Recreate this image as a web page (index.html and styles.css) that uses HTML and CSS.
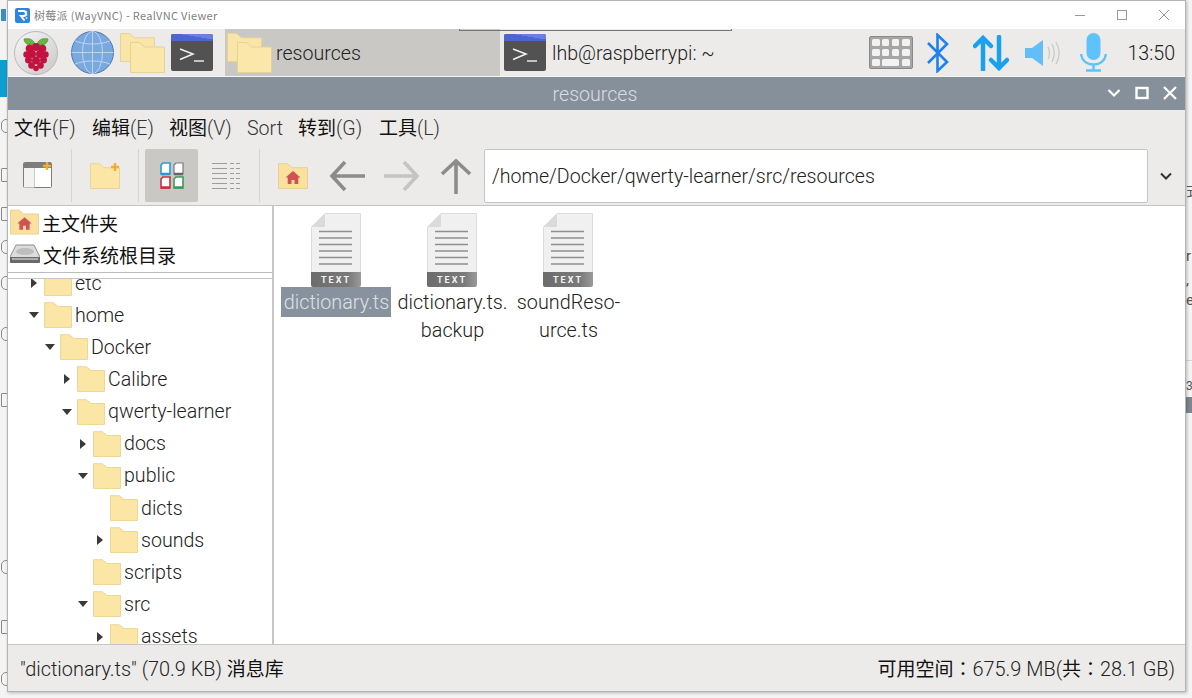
FILE: index.html
```html
<!DOCTYPE html>
<html lang="zh">
<head>
<meta charset="utf-8">
<title>树莓派 (WayVNC) - RealVNC Viewer</title>
<link rel="stylesheet" href="styles.css">
</head>
<body>
<svg class="defs" width="0" height="0" aria-hidden="true">
  <defs>
    <linearGradient id="band" x1="0" y1="0" x2="1" y2="0"><stop offset="0" stop-color="#6c6c6c"/><stop offset=".75" stop-color="#7a7a7a"/><stop offset="1" stop-color="#9a9a9a"/></linearGradient>
    <linearGradient id="bar" x1="0" y1="1" x2="1" y2="0"><stop offset=".6" stop-color="#4d66cf"/><stop offset=".61" stop-color="#6a80dc"/></linearGradient>
  </defs>
  <symbol id="folder" viewBox="0 0 28 26">
    <path d="M.5 25.500V.7h8.600l4.900 3.800h13.500v21z" fill="#fbe6a6" stroke="#ecd698"/>
  </symbol>
  <symbol id="folders" viewBox="0 0 45 40">
    <path d="M.5 28.500V.5h9l5 4.300h20v24z" fill="#f9e5a8" stroke="#e6d296"/>
    <path d="M10.500 39.500V9.500h9l5 4.500h20v25.500z" fill="#fbe7a9" stroke="#e6d296"/>
  </symbol>
  <symbol id="terminal" viewBox="0 0 42 37">
    <rect width="42" height="37" rx="2" fill="#525252"/>
    <path d="M0 7V2a2 2 0 0 1 2-2h38a2 2 0 0 1 2 2v5z" fill="url(#bar)"/>
    <path d="M9 15l13 5-13 5.500" fill="none" stroke="#f2f2f2" stroke-width="1.500"/>
    <path d="M23 27h10" stroke="#e8e8e8" stroke-width="1.500"/>
  </symbol>
  <symbol id="home-folder" viewBox="0 0 30 26">
    <path d="M.5 25.500V.7h9l4.500 4h15.500v20.800z" fill="#fbe1a0" stroke="#e9d092"/>
    <path d="M15 8l7.500 6.500h-2.200V21h-3.800v-4h-3v4H9.700v-6.500H7.500z" fill="#cf5353"/>
  </symbol>
  <symbol id="doc" viewBox="0 0 50 74">
    <path d="M14 .5h35.500V60H.5V14z" fill="#f0f0f0" stroke="#dcdcdc"/>
    <path d="M14 .5V14H.5z" fill="#dadada"/>
    <path d="M8 18.500h33M8 25h33M8 31.500h33M8 38h33M8 44.500h33M8 51h33" stroke="#8f8f8f" stroke-width="1.600"/>
    <path d="M0 59h50v13a2 2 0 0 1-2 2H2a2 2 0 0 1-2-2z" fill="url(#band)"/>
  </symbol>
</svg>

<div class="desktop" aria-hidden="true">
  <i class="bg-blue bg-blue-top"></i>
  <i class="bg-blue bg-blue-mid"></i>
  <i class="bg-ring ring-1"></i><i class="bg-ring ring-2"></i><i class="bg-ring ring-3"></i>
  <i class="bg-ring ring-4"></i><i class="bg-ring ring-5"></i><i class="bg-ring ring-6"></i>
  <i class="bg-ring ring-7"></i><i class="bg-ring ring-8"></i><i class="bg-ring ring-9"></i>
  <i class="bg-ring ring-10"></i>
  <span class="bg-text t1">式</span><span class="bg-text t2">r</span><span class="bg-text t3">,</span>
  <span class="bg-text t4">e</span><span class="bg-text t5">3</span>
  <i class="bg-line"></i><i class="bg-box"></i>
</div>

<div class="window">
  <header class="vnc-title">
    <svg class="vnc-logo" width="15" height="15" viewBox="0 0 15 15">
      <rect width="15" height="15" rx="2" fill="#2f86e0"/>
      <path d="M3 3h5.500a2.500 2.500 0 0 1 0 5H6l3.500 4.500" fill="none" stroke="#fff" stroke-width="2"/>
      <path d="M11.500 3v9" stroke="#cfe3f8" stroke-width="1.500" stroke-dasharray="2 1"/>
    </svg>
    <span class="vnc-name">树莓派 (WayVNC) - RealVNC Viewer</span>
    <div class="vnc-controls">
      <svg width="12" height="12" viewBox="0 0 12 12"><path d="M1 6.500h10" stroke="#9a9a9a"/></svg>
      <svg width="12" height="12" viewBox="0 0 12 12"><rect x="1.500" y="1.500" width="9" height="9" fill="none" stroke="#9a9a9a"/></svg>
      <svg width="12" height="12" viewBox="0 0 12 12"><path d="M1 1l10 10M11 1L1 11" stroke="#9a9a9a"/></svg>
    </div>
  </header>

  <div class="taskbar">
    <svg class="launch launch-pi" width="44" height="44" viewBox="0 0 44 44">
      <defs><linearGradient id="pi-bg" x1="0" y1="0" x2="1" y2="1"><stop offset="0" stop-color="#f7f7f7"/><stop offset="1" stop-color="#c8c8c8"/></linearGradient></defs>
      <circle cx="22" cy="22" r="21.500" fill="url(#pi-bg)" stroke="#b9b9b9"/>
      <path d="M21 13c-2-5-6-6-11-5 0 4 5 8 11 5zM23 13c2-5 6-6 11-5 0 4-5 8-11 5z" fill="#6cb33f" stroke="#3d7d24" stroke-width=".6"/>
      <g fill="#c2123f">
        <circle cx="22" cy="16" r="4"/><circle cx="15.500" cy="17.500" r="3.800"/><circle cx="28.500" cy="17.500" r="3.800"/>
        <circle cx="12.500" cy="23.500" r="3.200"/><circle cx="31.500" cy="23.500" r="3.200"/>
        <circle cx="18" cy="23" r="4"/><circle cx="26" cy="23" r="4"/>
        <circle cx="14.500" cy="29" r="3.500"/><circle cx="29.500" cy="29" r="3.500"/>
        <circle cx="22" cy="29.500" r="4"/><circle cx="17.500" cy="34.500" r="3.300"/><circle cx="26.500" cy="34.500" r="3.300"/>
        <circle cx="22" cy="37.500" r="2.800"/>
      </g>
    </svg>
    <svg class="launch launch-globe" width="43" height="43" viewBox="0 0 43 43">
      <circle cx="21.500" cy="21.500" r="21" fill="#7aa8e0" stroke="#4f7aa8"/>
      <g fill="none" stroke="#bcd4f0" stroke-width="1">
        <ellipse cx="21.500" cy="21.500" rx="10" ry="21"/>
        <path d="M21.500.5v42M.5 21.500h42M4 10c10 4 25 4 35 0M4 33c10-4 25-4 35 0"/>
      </g>
    </svg>
    <svg class="launch launch-files" width="45" height="40"><use href="#folders"/></svg>
    <svg class="launch launch-term" width="42" height="37"><use href="#terminal"/></svg>
    <div class="task task-active">
      <svg width="45" height="40"><use href="#folders"/></svg>
      <span>resources</span>
    </div>
    <div class="task task-term">
      <svg width="42" height="37"><use href="#terminal"/></svg>
      <span>lhb@raspberrypi: ~</span>
    </div>
    <div class="tray">
      <svg class="tray-kbd" width="44" height="33" viewBox="0 0 44 33">
        <rect x=".5" y=".5" width="43" height="32" rx="1.500" fill="#a6a6a6" stroke="#8a8a8a"/>
        <g fill="#f2f2f2">
          <rect x="3" y="3" width="8" height="7" rx="1.500"/><rect x="13" y="3" width="7" height="7" rx="1.500"/><rect x="23" y="3" width="7" height="7" rx="1.500"/><rect x="33" y="3" width="8" height="7" rx="1.500"/>
          <rect x="3" y="13" width="8" height="7" rx="1.500"/><rect x="13" y="13" width="7" height="7" rx="1.500"/><rect x="23" y="13" width="7" height="7" rx="1.500"/><rect x="33" y="13" width="8" height="7" rx="1.500"/>
          <rect x="3" y="23" width="8" height="7" rx="1.500"/><rect x="13" y="23" width="17" height="7" rx="1.500"/><rect x="33" y="23" width="8" height="7" rx="1.500"/>
        </g>
      </svg>
      <svg class="tray-bt" width="26" height="40" viewBox="0 0 26 40">
        <path d="M3 10l19 19-9.500 9V2L22 11 3 30" fill="none" stroke="#1c83ee" stroke-width="2.600" stroke-linejoin="miter"/>
      </svg>
      <svg class="tray-net" width="36" height="36" viewBox="0 0 36 36">
        <path d="M10 35V4M2 11l8-8 8 8" fill="none" stroke="#1aa0ee" stroke-width="4.500" stroke-linecap="round"/>
        <path d="M26 2v31M18 25l8 8 8-8" fill="none" stroke="#1aa0ee" stroke-width="4.500" stroke-linecap="round"/>
      </svg>
      <svg class="tray-spk" width="36" height="28" viewBox="0 0 36 28">
        <path d="M0 9h7l11-8v26L7 19H0z" fill="#62bdf8"/>
        <g fill="none" stroke="#c9c9c9" stroke-width="1.300"><path d="M23 8c2 4 2 8 0 12M27 5c3 6 3 12 0 18M31 3c4 7 4 15 0 22"/></g>
      </svg>
      <svg class="tray-mic" width="27" height="39" viewBox="0 0 27 39">
        <rect x="6.500" y="0" width="14" height="27" rx="7" fill="#5ec3fb"/>
        <path d="M1 21c1 7 6 10.500 12.500 10.500S25 28 26 21M13.500 31v6M6 37.500h15" fill="none" stroke="#5ec3fb" stroke-width="2.400"/>
      </svg>
      <span class="clock">13:50</span>
    </div>
  </div>

  <div class="app-title">
    <span>resources</span>
    <div class="app-controls">
      <svg width="14" height="14" viewBox="0 0 14 14"><path d="M1.500 4L7 9.500 12.500 4" fill="none" stroke="#fff" stroke-width="2.200"/></svg>
      <svg width="14" height="14" viewBox="0 0 14 14"><rect x="1.500" y="2" width="11" height="10" fill="none" stroke="#fff" stroke-width="2.400"/></svg>
      <svg width="14" height="14" viewBox="0 0 14 14"><path d="M1 1l12 12M13 1L1 13" stroke="#fff" stroke-width="2.200"/></svg>
    </div>
  </div>

  <nav class="menu">
    <span class="m-file"><span class="zh">文件</span>(F)</span>
    <span class="m-edit"><span class="zh">编辑</span>(E)</span>
    <span class="m-view"><span class="zh">视图</span>(V)</span>
    <span class="m-sort">Sort</span>
    <span class="m-go"><span class="zh">转到</span>(G)</span>
    <span class="m-tool"><span class="zh">工具</span>(L)</span>
  </nav>

  <div class="toolbar">
    <div class="tb-btn">
      <svg width="30" height="27" viewBox="0 0 30 27">
        <rect x=".5" y=".5" width="28" height="25" rx="1" fill="#fff" stroke="#7d7d7d"/>
        <path d="M1 1h27v5H1z" fill="#7d7d7d"/><path d="M11 6v20" stroke="#9a9a9a"/>
        <rect x="1" y="6" width="10" height="19.500" fill="#f2f2f2"/>
        <path d="M24 0v8M20 4h8" stroke="#f1ad2b" stroke-width="2.400"/>
      </svg>
    </div>
    <i class="tb-sep"></i>
    <div class="tb-btn">
      <svg width="30" height="26" viewBox="0 0 30 26">
        <path d="M.5 25.500V.7h9l4.500 4h15.500v20.800z" fill="#fbe6a6" stroke="#e9d498"/>
        <path d="M25 0v8M21 4h8" stroke="#f1ad2b" stroke-width="2.400"/>
      </svg>
    </div>
    <i class="tb-sep"></i>
    <div class="tb-btn tb-on">
      <svg width="24" height="27" viewBox="0 0 24 27">
        <path d="M3 1h7v11H1V3z" fill="#fff" stroke="#2a9ad6" stroke-width="1.600"/><path d="M1 12h9" stroke="#2a9ad6" stroke-width="2.500"/>
        <path d="M16 1h7v11h-9V3z" fill="#fff" stroke="#7a7a7a" stroke-width="1.200"/><path d="M14 12h9" stroke="#666" stroke-width="2.500"/>
        <path d="M3 15h7v11H1V17z" fill="#fff" stroke="#c9323b" stroke-width="1.600"/><path d="M1 25.500h9" stroke="#c9323b" stroke-width="2.500"/>
        <path d="M16 15h7v11h-9V17z" fill="#fff" stroke="#3d9a5f" stroke-width="1.600"/><path d="M14 25.500h9" stroke="#3d9a5f" stroke-width="2.500"/>
      </svg>
    </div>
    <div class="tb-btn">
      <svg width="28" height="28" viewBox="0 0 28 28">
        <path d="M0 1.500h15M18 1.500h4M24 1.500h4M0 6.500h15M18 6.500h4M24 6.500h4M0 11.500h15M18 11.500h4M24 11.500h4M0 16.500h15M18 16.500h4M24 16.500h4M0 21.500h15M18 21.500h4M24 21.500h4M0 26.500h15M18 26.500h4M24 26.500h4" stroke="#9c9c9c"/>
      </svg>
    </div>
    <i class="tb-sep"></i>
    <div class="tb-btn"><svg width="30" height="26"><use href="#home-folder"/></svg></div>
    <div class="tb-btn tb-nav">
      <svg width="37" height="32" viewBox="0 0 37 32"><path d="M36 16H3M16 2L3 16l13 14" fill="none" stroke="#8c8c8c" stroke-width="3.600"/></svg>
    </div>
    <div class="tb-btn tb-nav">
      <svg width="37" height="32" viewBox="0 0 37 32"><path d="M1 16h33M21 2l13 14-13 14" fill="none" stroke="#c4c4c4" stroke-width="3.600"/></svg>
    </div>
    <div class="tb-btn tb-nav">
      <svg width="32" height="36" viewBox="0 0 32 36"><path d="M16 36V3M2 16L16 3l14 13" fill="none" stroke="#8c8c8c" stroke-width="3.600"/></svg>
    </div>
    <div class="path-box">/home/Docker/qwerty-learner/src/resources</div>
    <svg class="path-drop" width="12" height="8" viewBox="0 0 12 8"><path d="M1 1.500l5 5 5-5" fill="none" stroke="#333" stroke-width="2"/></svg>
  </div>

  <div class="panes">
    <aside class="side">
      <div class="places">
        <div class="place"><svg width="29" height="26"><use href="#home-folder"/></svg><span class="zh">主文件夹</span></div>
        <div class="place">
          <svg width="30" height="20" viewBox="0 0 30 20">
            <path d="M6 1h18l6 12v5H0v-5z" fill="#dcdcdc" stroke="#8c8c8c"/>
            <ellipse cx="15" cy="7.500" rx="9" ry="3.600" fill="#bdbdbd"/>
            <path d="M0 13h30v5a1 1 0 0 1-1 1H1a1 1 0 0 1-1-1z" fill="#6a6a6a"/><path d="M2 15h26" stroke="#efefef"/>
          </svg>
          <span class="zh">文件系统根目录</span>
        </div>
      </div>
      <div class="tree">
        <div class="row row-top d0"><i class="arrow right"></i><svg width="28" height="26"><use href="#folder"/></svg><span>etc</span></div>
        <div class="row d0"><i class="arrow down"></i><svg width="28" height="26"><use href="#folder"/></svg><span>home</span></div>
        <div class="row d1"><i class="arrow down"></i><svg width="28" height="26"><use href="#folder"/></svg><span>Docker</span></div>
        <div class="row d2"><i class="arrow right"></i><svg width="28" height="26"><use href="#folder"/></svg><span>Calibre</span></div>
        <div class="row d2"><i class="arrow down"></i><svg width="28" height="26"><use href="#folder"/></svg><span>qwerty-learner</span></div>
        <div class="row d3"><i class="arrow right"></i><svg width="28" height="26"><use href="#folder"/></svg><span>docs</span></div>
        <div class="row d3"><i class="arrow down"></i><svg width="28" height="26"><use href="#folder"/></svg><span>public</span></div>
        <div class="row d4"><i class="arrow"></i><svg width="28" height="26"><use href="#folder"/></svg><span>dicts</span></div>
        <div class="row d4"><i class="arrow right"></i><svg width="28" height="26"><use href="#folder"/></svg><span>sounds</span></div>
        <div class="row d3"><i class="arrow"></i><svg width="28" height="26"><use href="#folder"/></svg><span>scripts</span></div>
        <div class="row d3"><i class="arrow down"></i><svg width="28" height="26"><use href="#folder"/></svg><span>src</span></div>
        <div class="row d4"><i class="arrow right"></i><svg width="28" height="26"><use href="#folder"/></svg><span>assets</span></div>
      </div>
    </aside>
    <main class="files">
      <div class="file">
        <div class="doc"><svg width="50" height="74"><use href="#doc"/></svg><b>TEXT</b></div>
        <div class="label selected">dictionary.ts</div>
      </div>
      <div class="file">
        <div class="doc"><svg width="50" height="74"><use href="#doc"/></svg><b>TEXT</b></div>
        <div class="label">dictionary.ts.<br>backup</div>
      </div>
      <div class="file">
        <div class="doc"><svg width="50" height="74"><use href="#doc"/></svg><b>TEXT</b></div>
        <div class="label">soundReso-<br>urce.ts</div>
      </div>
    </main>
  </div>

  <footer class="status">
    <span>"dictionary.ts" (70.9 KB) <span class="zh">消息库</span></span>
    <span><span class="zh" lang="zh-TW">可用空间：</span>675.9 MB(<span class="zh" lang="zh-TW">共：</span>28.1 GB)</span>
  </footer>
</div>
<i class="glitch"></i>
</body>
</html>
```

FILE: styles.css
```css
* { box-sizing: border-box; }
html, body { margin: 0; height: 698px; overflow: hidden; }
body {
  position: relative;
  background: #f4f4f4;
  font-family: Roboto, "Noto Sans CJK SC", sans-serif;
  font-weight: 300;
  font-size: 19.6px;
  color: #222;
}
svg { display: block; flex: none; }
.defs { position: absolute; }
.zh {
  font-family: "Noto Sans CJK TC", "Noto Sans CJK SC", sans-serif;
  font-size: 19px;
  font-weight: 400;
  color: #111;
}

/* desktop behind the window */
.desktop { position: absolute; inset: 0; overflow: hidden; }
.bg-blue { position: absolute; left: 0; width: 7px; background: #0f9ed2; }
.bg-blue-top { top: 9px; height: 12px; left: 1px; width: 5px; background: #3c8fc4; }
.bg-blue-mid { top: 60px; height: 37px; }
.bg-ring { position: absolute; left: 1px; width: 10px; height: 14px; border: 1px solid #8a8a8a; border-radius: 5px; }
.ring-1 { top: 119px; }
.ring-2 { top: 168px; border-radius: 1px; }
.ring-3 { top: 207px; border-radius: 1px; }
.ring-4 { top: 240px; }
.ring-5 { top: 276px; }
.ring-6 { top: 327px; }
.ring-7 { top: 393px; border-radius: 1px; }
.ring-8 { top: 560px; }
.ring-9 { top: 620px; border-radius: 1px; }
.ring-10 { top: 672px; }
.bg-text { position: absolute; left: 1186px; font-size: 15px; font-weight: 400; color: #555; line-height: 16px; }
.t1 { top: 183px; }
.t2 { top: 248px; }
.t3 { top: 272px; }
.t4 { top: 292px; }
.t5 { top: 378px; font-size: 12px; }
.bg-line { position: absolute; left: 1186px; top: 360px; width: 6px; height: 1px; background: #d5d5d5; }
.bg-box { position: absolute; left: 1186px; top: 397px; width: 6px; height: 16px; background: #7d8790; }

/* window */
.window {
  position: relative;
  margin-left: 7px;
  width: 1179px;
  height: 692px;
  display: flex;
  flex-direction: column;
  background: #fff;
  border: 1px solid #b4b4b4;
  box-shadow: 1px 1px 3px rgba(0, 0, 0, .25);
}

.vnc-title {
  height: 28px;
  flex: none;
  display: flex;
  align-items: center;
  padding: 0 15px 0 7px;
  background: #fff;
}
.vnc-name {
  margin-left: 4px;
  font-family: "Noto Sans CJK SC", sans-serif;
  font-weight: 400;
  font-size: 11px;
  color: #7f7f7f;
  letter-spacing: .3px;
}
.vnc-controls { margin-left: auto; display: flex; gap: 30px; }

.taskbar {
  height: 48px;
  flex: none;
  display: flex;
  align-items: center;
  background: #ecebe9;
  border-bottom: 1px solid #f5f5f5;
  padding-left: 6px;
}
.launch-globe { margin-left: 13px; }
.launch-files { margin-left: 6px; }
.launch-term { margin-left: 6px; }
.task { height: 100%; display: flex; align-items: center; }
.task span { padding-top: 2px; }
.task-active {
  margin-left: 12px;
  width: 275px;
  padding-left: 2px;
  gap: 4px;
  background: #c9c8c5;
}
.task-term { width: 300px; padding-left: 4px; gap: 6px; }
.tray { margin-left: auto; display: flex; align-items: center; padding-right: 10px; }
.tray-bt { margin-left: 12px; }
.tray-net { margin-left: 22px; }
.tray-spk { margin-left: 16px; }
.tray-mic { margin-left: 19px; }
.clock { margin-left: 20px; padding-top: 2px; }

.app-title {
  position: relative;
  height: 33px;
  flex: none;
  display: flex;
  align-items: center;
  justify-content: center;
  background: #86909b;
  color: #d9dde1;
  padding: 2px 3px 0 0;
}
.app-controls {
  position: absolute;
  right: 8px;
  top: 9px;
  display: flex;
  gap: 14px;
}

.menu {
  height: 36px;
  flex: none;
  display: flex;
  align-items: baseline;
  padding: 3px 0 0 6px;
  background: #ecebe9;
  color: #333;
  white-space: nowrap;
}
.m-file { width: 78px; }
.m-edit { width: 77px; }
.m-view { width: 78px; }
.m-sort { width: 51px; }
.m-go { width: 81px; }

.toolbar {
  height: 60px;
  flex: none;
  display: flex;
  align-items: center;
  padding-left: 3px;
  background: #ecebe9;
  border-bottom: 1px solid #c4c4c4;
}
.tb-btn {
  width: 53px;
  height: 53px;
  flex: none;
  display: flex;
  align-items: center;
  justify-content: center;
  border-radius: 2px;
}
.tb-btn + .tb-btn { margin-left: 1px; }
.tb-sep + .tb-btn + .tb-nav { margin-left: 2px; }
.tb-on { background: #c9c8c5; }
.tb-sep { width: 1px; height: 53px; margin: 0 6px 0 7px; background: #d4d4d4; flex: none; }
.path-box {
  width: 664px;
  height: 54px;
  margin-left: 2px;
  flex: none;
  display: flex;
  align-items: center;
  padding: 2px 0 0 7px;
  background: #fff;
  border: 1px solid #c6c6c6;
  border-radius: 2px;
}
.path-drop { margin-left: 12px; }

.panes { flex: 1; min-height: 0; display: flex; background: #fff; }
.side {
  width: 266px;
  flex: none;
  display: flex;
  flex-direction: column;
  border-right: 2px solid #c6c6c6;
  background: #fff;
}
.places {
  height: 67px;
  flex: none;
  border-bottom: 1px solid #bdbdbd;
}
.place { height: 32px; display: flex; align-items: center; padding-left: 2px; gap: 3px; }
.tree {
  flex: 1;
  min-height: 0;
  overflow: hidden;
  border-top: 1px solid #c6c6c6;
  margin-top: 5px;
}
.row { height: 32.15px; display: flex; align-items: center; white-space: nowrap; }
.row-top { margin-top: -12px; }
.row span { margin-left: 3px; }
.arrow { width: 10px; height: 10px; margin-right: 5px; flex: none; position: relative; }
.arrow.right::after, .arrow.down::after { content: ""; position: absolute; border-style: solid; border-color: transparent; }
.arrow.right::after { left: 2px; top: 0; border-width: 5px 0 5px 6px; border-left-color: #3a3a3a; }
.arrow.down::after { left: 0; top: 2px; border-width: 6px 5px 0; border-top-color: #3a3a3a; }
.d0 { padding-left: 21px; }
.d1 { padding-left: 37px; }
.d2 { padding-left: 54px; }
.d3 { padding-left: 70px; }
.d4 { padding-left: 87px; }

.files { flex: 1; display: flex; padding: 7px 0 0 4px; align-items: flex-start; }
.file { width: 116px; display: flex; flex-direction: column; align-items: center; }
.doc { position: relative; width: 50px; height: 74px; }
.doc b {
  position: absolute;
  left: 0;
  right: 0;
  bottom: 1px;
  text-align: center;
  font-family: Roboto, sans-serif;
  font-weight: 700;
  font-size: 9px;
  letter-spacing: 2px;
  line-height: 12px;
  color: #f4f4f4;
}
.label { text-align: center; font-size: 19.8px; line-height: 28px; padding: 2px 0 0 1px; white-space: nowrap; }
.label.selected {
  width: 110px;
  height: 30px;
  background: #87929e;
  color: #dde1e4;
}

.status {
  height: 47px;
  flex: none;
  display: flex;
  align-items: center;
  justify-content: space-between;
  padding: 0 10px 2px 12px;
  background: #ecebe9;
  border-top: 1px solid #c6c6c6;
  font-size: 19.9px;
}

.glitch {
  position: absolute;
  left: 459px;
  top: 29px;
  width: 273px;
  height: 2px;
  border: 1px solid #777;
  border-top: 0;
}
```
